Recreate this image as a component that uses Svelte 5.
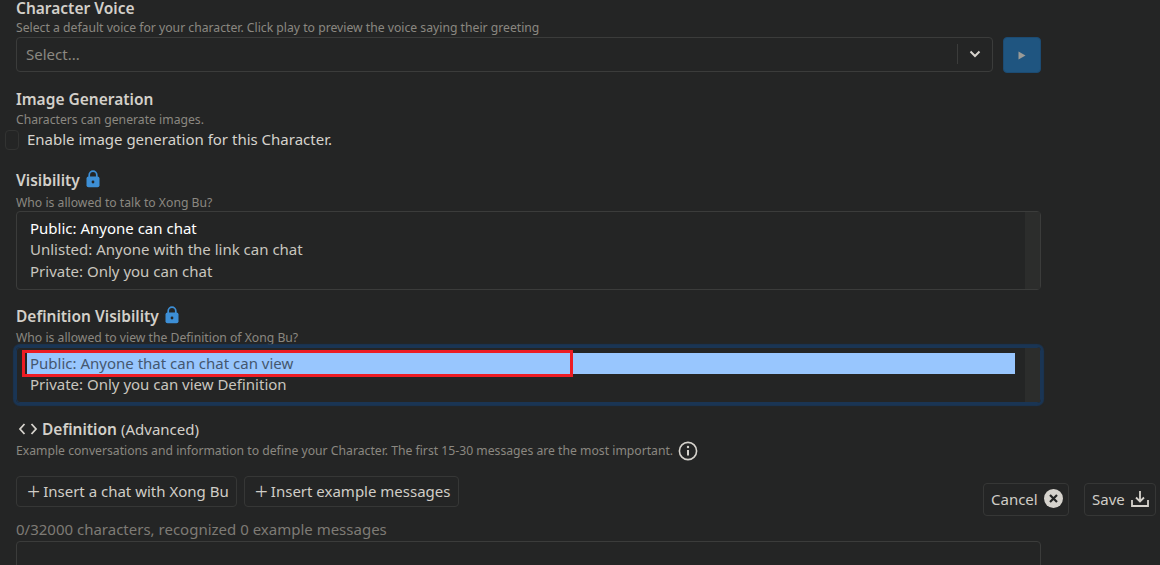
<script>
    const visibility = ["Public: Anyone can chat", "Unlisted: Anyone with the link can chat", "Private: Only you can chat"];
    const definitionVisibility = ["Public: Anyone that can chat can view", "Private: Only you can view Definition"];
</script>

{#snippet lock()}
    <svg class="lock" width="14" height="18" viewBox="0 0 14 18">
        <path d="M3.2 7V5a3.8 3.8 0 0 1 7.6 0v2" fill="none" stroke="#3d8fd6" stroke-width="1.7" />
        <rect x="0.5" y="6.6" width="13" height="10.6" rx="2" fill="#3d8fd6" />
        <circle cx="7" cy="12" r="1.4" fill="#242525" />
    </svg>
{/snippet}

<main class="page">
    <section class="voice">
        <h3>Character Voice</h3>
        <p class="hint">Select a default voice for your character. Click play to preview the voice saying their greeting</p>
        <div class="voice-row">
            <div class="select">
                <span class="placeholder">Select...</span>
                <span class="divider"></span>
                <svg class="chevron" width="12" height="8" viewBox="0 0 12 8">
                    <path d="M1.5 1.5 6 6l4.5-4.5" fill="none" stroke="#d6d3cd" stroke-width="2" />
                </svg>
            </div>
            <button class="play" aria-label="Play">
                <svg width="8" height="9" viewBox="0 0 8 9"><path d="M0.5 0.5 7.5 4.5 0.5 8.5z" fill="#9a9b97" /></svg>
            </button>
        </div>
    </section>

    <section class="image-gen">
        <h3>Image Generation</h3>
        <p class="hint">Characters can generate images.</p>
        <label class="check">
            <span class="box"></span>
            <span>Enable image generation for this Character.</span>
        </label>
    </section>

    <section class="vis">
        <h3>Visibility {@render lock()}</h3>
        <p class="hint">Who is allowed to talk to Xong Bu?</p>
        <div class="listbox">
            <div class="options">
                {#each visibility as option, i}
                    <div class="option" class:current={i === 0}>{option}</div>
                {/each}
            </div>
            <div class="scrollbar"></div>
        </div>
    </section>

    <section class="def-vis">
        <h3>Definition Visibility {@render lock()}</h3>
        <p class="hint">Who is allowed to view the Definition of Xong Bu?</p>
        <div class="listbox focused">
            <div class="options">
                {#each definitionVisibility as option, i}
                    <div class="option" class:selected={i === 0}>{option}</div>
                {/each}
            </div>
            <div class="scrollbar"></div>
            <div class="annotation"></div>
        </div>
    </section>

    <section class="definition">
        <h3 class="def-title">
            <svg width="20" height="14" viewBox="0 0 20 14">
                <path d="M6.5 2 2 7l4.5 5M13.5 2 18 7l-4.5 5" fill="none" stroke="#d6d3cd" stroke-width="1.8" />
            </svg>
            <span>Definition <span class="advanced">(Advanced)</span></span>
        </h3>
        <p class="hint with-icon">
            Example conversations and information to define your Character. The first 15-30 messages are the most important.
            <svg width="20" height="20" viewBox="0 0 20 20">
                <circle cx="10" cy="10" r="8.6" fill="none" stroke="#d6d3cd" stroke-width="1.6" />
                <path d="M10 9v5.5" stroke="#d6d3cd" stroke-width="2" />
                <circle cx="10" cy="6" r="1.2" fill="#d6d3cd" />
            </svg>
        </p>
        <div class="inserts">
            <button class="outline"><span class="plus">+</span>Insert a chat with Xong Bu</button>
            <button class="outline"><span class="plus">+</span>Insert example messages</button>
        </div>
        <p class="counter">0/32000 characters, recognized 0 example messages</p>
        <div class="textarea"></div>
    </section>

    <div class="floating">
        <button class="outline cancel">
            Cancel
            <svg width="19" height="19" viewBox="0 0 19 19">
                <circle cx="9.5" cy="9.5" r="9.5" fill="#d6d3cd" />
                <path d="M6 6l7 7M13 6l-7 7" stroke="#242525" stroke-width="2.2" />
            </svg>
        </button>
        <button class="outline save">
            Save
            <svg width="18" height="18" viewBox="0 0 18 18">
                <path d="M9 1v10M5 7.5l4 4 4-4M1 10v6h16v-6" fill="none" stroke="#d6d3cd" stroke-width="1.8" />
            </svg>
        </button>
    </div>
</main>

<style>
    :global(body) {
        background: #242525;
    }

    .page {
        position: relative;
        height: 565px;
        overflow: hidden;
        box-sizing: border-box;
        padding: 0 119px 0 16px;
        background: #242525;
        color: #d6d3cd;
        font-family: "Noto Sans", sans-serif;
    }

    section {
        display: flow-root;
    }

    h3 {
        margin: 0;
        font-size: 15.5px;
        font-weight: 600;
        line-height: 20px;
        color: #d3d0ca;
    }

    .hint {
        margin: 0;
        font-size: 12.2px;
        line-height: 18px;
        color: #8b8881;
    }

    .voice h3 {
        line-height: 16px;
    }

    .voice .hint {
        margin-top: 3px;
    }

    .voice-row {
        display: flex;
        gap: 10px;
    }

    .select {
        flex: 1;
        height: 35px;
        box-sizing: border-box;
        display: flex;
        align-items: center;
        padding: 0 11px 2px 9px;
        border: 1px solid #3b3c3b;
        border-radius: 4px;
    }

    .placeholder {
        flex: 1;
        font-size: 15px;
        color: #8b8881;
    }

    .divider {
        width: 1px;
        height: 20px;
        background: #3b3c3b;
        margin-right: 11px;
    }

    .play {
        width: 38px;
        height: 36px;
        padding: 0;
        display: flex;
        align-items: center;
        justify-content: center;
        background: #1f5580;
        border: 1px solid #1c4b72;
        border-radius: 4px;
    }

    .image-gen {
        margin-top: 16px;
    }

    .image-gen .hint {
        margin-top: 2px;
    }

    .check {
        display: flex;
        align-items: center;
        gap: 8px;
        margin: -2px 0 0 -11px;
        font-size: 15px;
        line-height: 22px;
    }

    .box {
        width: 14px;
        height: 20px;
        border: 1px solid #323332;
        border-radius: 4px;
        box-sizing: border-box;
        margin-top: 3px;
    }

    .vis {
        margin-top: 20px;
    }

    .vis .hint {
        margin-top: 4px;
    }

    .lock {
        vertical-align: -2px;
        margin-left: 2px;
    }

    .listbox {
        position: relative;
        display: flex;
        margin-top: -1px;
        border: 1px solid #3b3c3b;
        border-radius: 4px;
    }

    .options {
        flex: 1;
        padding: 6px 10px 6.8px 13px;
        font-size: 15px;
        line-height: 21.4px;
    }

    .option {
        color: #c9c6bf;
    }

    .option.current {
        color: #fff;
    }

    .scrollbar {
        width: 15px;
        background: #2c2d2c;
    }

    .def-vis {
        margin-top: 16px;
    }

    .def-vis .hint {
        margin-top: 3px;
    }

    .focused {
        margin-top: 0;
        border-color: #1a3554;
        box-shadow: 0 0 1px 3px #1a3554;
    }

    .focused .options {
        padding: 5px 10px 6px 13px;
    }

    .selected {
        background: #98c6fe;
        color: #44576f;
        margin-left: -3px;
        padding-left: 3px;
    }

    .annotation {
        position: absolute;
        left: 5px;
        top: 2px;
        width: 551px;
        height: 27px;
        box-sizing: border-box;
        border: 3px solid #ed1c24;
    }

    .definition {
        margin-top: 16px;
    }

    .def-title {
        display: flex;
        align-items: center;
        gap: 4px;
        margin-left: 2px;
    }

    .advanced {
        font-size: 15px;
        font-weight: 400;
    }

    .with-icon {
        display: flex;
        align-items: center;
        gap: 5px;
        line-height: 24px;
    }

    .inserts {
        display: flex;
        gap: 7px;
        margin-top: 13px;
    }

    .outline {
        display: flex;
        align-items: center;
        background: transparent;
        border: 1px solid #363736;
        border-radius: 4px;
        color: #d0cdc7;
        font-family: inherit;
        font-size: 15px;
        padding: 0;
    }

    .inserts .outline {
        height: 31px;
        padding: 0 7px 0 10px;
    }

    .plus {
        font-size: 23px;
        font-weight: 300;
        line-height: 1;
        margin-right: 3px;
    }

    .counter {
        margin: 12px 0 0;
        font-size: 15px;
        line-height: 21px;
        color: #7e7b75;
    }

    .textarea {
        height: 60px;
        margin-top: 1px;
        border: 1px solid #3b3c3b;
        border-radius: 4px;
    }

    .floating {
        position: absolute;
        top: 483px;
        right: 4px;
        display: flex;
        gap: 15px;
    }

    .floating .outline {
        height: 33px;
        gap: 6px;
        box-sizing: border-box;
        padding-bottom: 2px;
    }

    .cancel {
        width: 86px;
        padding-left: 7px;
    }

    .save {
        width: 72px;
        padding-left: 7px;
    }
</style>
